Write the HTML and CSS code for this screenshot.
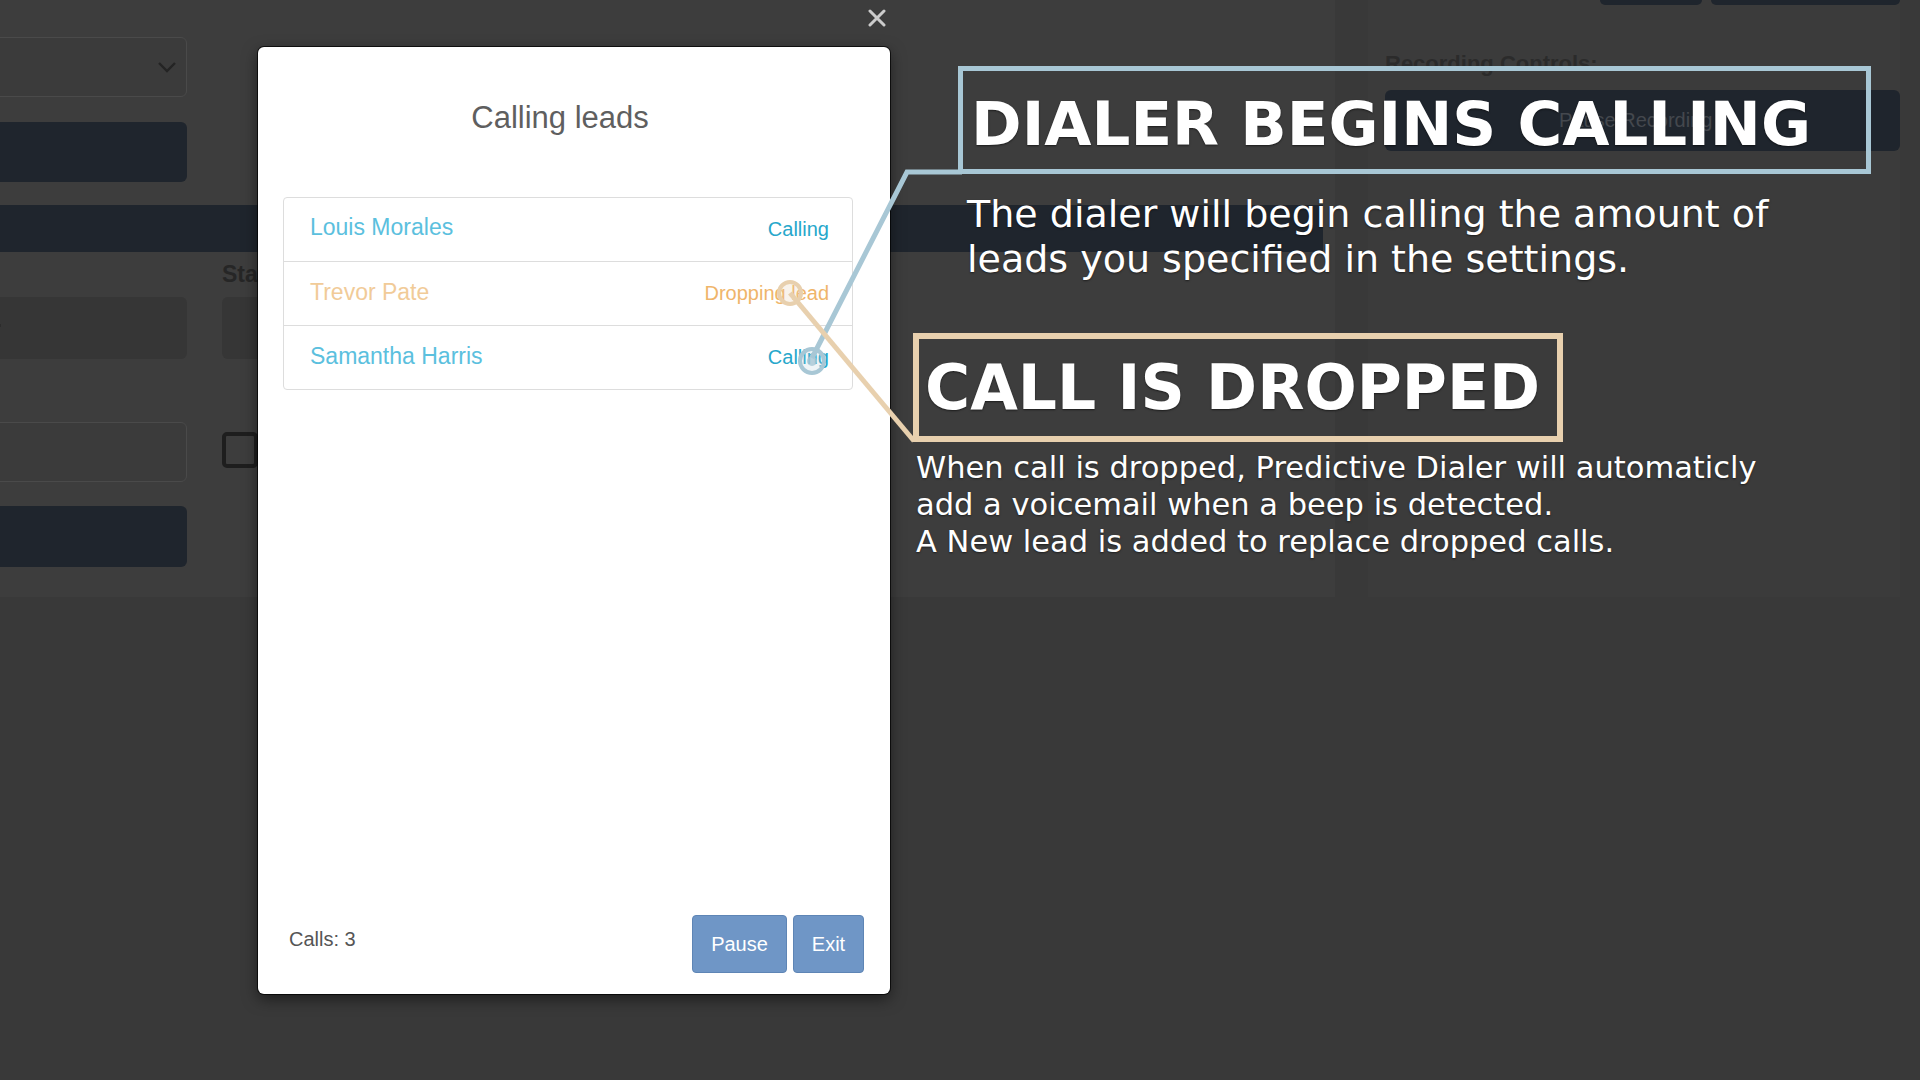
FILE: index.html
```html
<!DOCTYPE html>
<html lang="en">
<head>
<meta charset="utf-8">
<title>Calling leads</title>
<link rel="stylesheet" href="styles.css">
</head>
<body>
<div class="page">
  <div class="left">
    <div class="select">
      <svg class="chev" width="20" height="12" viewBox="0 0 20 12"><path d="M2 2 L10 10 L18 2" fill="none" stroke="#242424" stroke-width="2.4"/></svg>
    </div>
    <div class="navy-btn"></div>
    <div class="navy-bar"></div>
    <div class="form-grid">
      <div class="col col-a">
        <div class="label"></div>
        <div class="field field-fill"><span class="cut"></span></div>
        <div class="field field-line row2"></div>
        <div class="navy-btn btn-last"></div>
      </div>
      <div class="col col-b">
        <div class="label">Status</div>
        <div class="field field-fill"></div>
        <div class="checkbox"></div>
      </div>
    </div>
  </div>
  <div class="right">
    <div class="top-btns">
      <div class="top-btn w1"></div>
      <div class="top-btn w2"></div>
    </div>
    <div class="rec-label">Recording Controls:</div>
    <div class="rec-btn"><span>Pause Recording</span></div>
  </div>
</div>

<div class="modal">
  <div class="modal-header">Calling leads</div>
  <div class="lead-list">
    <div class="lead"><span class="name info">Louis Morales</span><span class="status info-dark">Calling</span></div>
    <div class="lead"><span class="name warn">Trevor Pate</span><span class="status warn-dark">Dropping lead</span></div>
    <div class="lead"><span class="name info">Samantha Harris</span><span class="status info-dark">Calling</span></div>
  </div>
  <div class="modal-footer">
    <span class="calls">Calls: 3</span>
    <div class="actions">
      <button class="btn btn-pause">Pause</button>
      <button class="btn btn-exit">Exit</button>
    </div>
  </div>
</div>

<div class="close-x">
  <svg width="18" height="18" viewBox="0 0 18 18"><path d="M2 2 L16 16 M16 2 L2 16" stroke="#cccccc" stroke-width="3" stroke-linecap="round"/></svg>
</div>

<svg class="callouts" width="1920" height="1080" viewBox="0 0 1920 1080">
  <polyline points="812,358 907,172 962,172" fill="none" stroke="#a8c7d5" stroke-width="5" stroke-linejoin="miter"/>
  <line x1="790" y1="293" x2="914" y2="441" stroke="#e8d0ae" stroke-width="5"/>
  <circle cx="790" cy="293" r="11" fill="rgba(232,208,174,0.25)" stroke="#e8d0ae" stroke-width="4"/>
  <circle cx="812" cy="361" r="12" fill="rgba(168,199,213,0.2)" stroke="#a8c7d5" stroke-width="4"/>
  <circle cx="812" cy="361" r="5" fill="#a8c7d5" opacity="0.8"/>
</svg>

<div class="note-box note-box-1"><span class="note-title">DIALER BEGINS CALLING</span></div>
<div class="note-text note-text-1">The dialer will begin calling the amount of<br>leads you specified in the settings.</div>
<div class="note-box note-box-2"><span class="note-title">CALL IS DROPPED</span></div>
<div class="note-text note-text-2">When call is dropped, Predictive Dialer will automaticly<br>add a voicemail when a beep is detected.<br>A New lead is added to replace dropped calls.</div>
</body>
</html>
```

FILE: styles.css
```css
html, body {
  margin: 0;
  padding: 0;
}
body {
  width: 1920px;
  height: 1080px;
  overflow: hidden;
  background: #393939;
  font-family: "Liberation Sans", Arial, sans-serif;
  position: relative;
}

/* background page (dimmed) */
.page {
  display: grid;
  grid-template-columns: 1335px 532px;
  column-gap: 33px;
  height: 597px;
}
.left {
  background: #3d3d3d;
  padding-top: 37px;
  box-sizing: border-box;
  height: 597px;
  overflow: hidden;
}
.select {
  margin-left: -20px;
  width: 207px;
  height: 60px;
  box-sizing: border-box;
  border: 1px solid #4a4a4a;
  border-radius: 6px;
  background: #3b3b3b;
  display: flex;
  align-items: center;
  justify-content: flex-end;
  padding-right: 9px;
}
.navy-btn {
  margin-top: 25px;
  margin-left: -20px;
  width: 207px;
  height: 60px;
  background: #1f252d;
  border-radius: 6px;
}
.navy-bar {
  margin-top: 23px;
  margin-left: -20px;
  width: 1343px;
  height: 47px;
  background: #1f252d;
}
.form-grid {
  display: grid;
  grid-template-columns: 207px 420px;
  column-gap: 35px;
  margin-left: -20px;
}
.col {
  display: flow-root;
}
.label {
  margin-top: 9px;
  height: 26px;
  line-height: 26px;
  font-size: 23px;
  font-weight: bold;
  color: #262626;
}
.field {
  margin-top: 10px;
  height: 62px;
  box-sizing: border-box;
  border-radius: 6px;
  display: flow-root;
}
.field-fill {
  background: #363636;
}
.field-line {
  background: #3b3b3b;
  border: 1px solid #4a4a4a;
}
.row2 {
  margin-top: 63px;
  height: 60px;
}
.cut {
  display: block;
  margin: 27px 0 0 18px;
  width: 3px;
  height: 3px;
  background: #2c2c2c;
}
.btn-last {
  margin-left: 0;
  margin-top: 24px;
  height: 61px;
}
.checkbox {
  margin-top: 73px;
  width: 36px;
  height: 36px;
  box-sizing: border-box;
  border: 4px solid #1e1e1e;
  border-radius: 5px;
}

.right {
  background: #3b3b3b;
  padding-left: 17px;
  height: 597px;
  box-sizing: border-box;
}
.top-btns {
  display: flex;
  justify-content: flex-end;
  gap: 9px;
  margin-top: -35px;
}
.top-btn {
  height: 40px;
  background: #1f252d;
  border-radius: 5px;
}
.w1 { width: 102px; }
.w2 { width: 189px; }
.rec-label {
  margin-top: 46px;
  font-size: 22px;
  font-weight: bold;
  color: #2b2b2b;
  line-height: 26px;
  height: 26px;
}
.rec-btn {
  margin-top: 13px;
  height: 61px;
  background: #1f252d;
  border-radius: 6px;
  display: flex;
  align-items: center;
  padding-left: 174px;
  color: #44484e;
  font-size: 20px;
  white-space: nowrap;
  overflow: hidden;
}

/* modal */
.modal {
  position: absolute;
  left: 258px;
  top: 47px;
  width: 632px;
  height: 947px;
  box-sizing: border-box;
  background: #ffffff;
  border-radius: 6px;
  box-shadow: 0 0 0 1px rgba(0,0,0,0.7), 0 5px 15px rgba(0,0,0,0.5);
  display: flex;
  flex-direction: column;
  padding: 0 26px 21px 25px;
}
.modal-header {
  padding-top: 54px;
  padding-right: 27px;
  text-align: center;
  font-size: 31px;
  line-height: 34px;
  color: #5f5f5f;
}
.lead-list {
  margin-top: 62px;
  margin-right: 11px;
}
.lead {
  height: 63px;
  border: 1px solid #dddddd;
  margin-bottom: -1px;
  display: flex;
  align-items: center;
  justify-content: space-between;
  padding: 0 23px 0 26px;
}
.lead:first-child {
  border-radius: 4px 4px 0 0;
}
.lead:last-child {
  border-radius: 0 0 4px 4px;
}
.name {
  font-size: 23px;
  margin-top: -2px;
}
.lead:first-child .name {
  margin-top: -4px;
}
.status {
  font-size: 20px;
}
.info { color: #5bc0de; }
.info-dark { color: #27a7cb; }
.warn { color: #f1cb98; }
.warn-dark { color: #efb56a; }

.modal-footer {
  margin-top: auto;
  display: flex;
  align-items: center;
}
.calls {
  padding-left: 6px;
  font-size: 20px;
  color: #555555;
  margin-bottom: 10px;
}
.actions {
  margin-left: auto;
  display: flex;
  gap: 6px;
}
.btn {
  height: 58px;
  border: 1px solid #5e85b5;
  border-radius: 4px;
  background: #6f96c6;
  color: #ffffff;
  font-family: "Liberation Sans", Arial, sans-serif;
  font-size: 20px;
  padding: 0;
}
.btn-pause { width: 95px; }
.btn-exit { width: 71px; }

.close-x {
  position: absolute;
  left: 868px;
  top: 9px;
  width: 18px;
  height: 18px;
}
.close-x svg { display: block; }

/* annotations */
.callouts {
  position: absolute;
  left: 0;
  top: 0;
  pointer-events: none;
}
.note-box {
  position: absolute;
  box-sizing: border-box;
}
.note-title {
  display: block;
  font-family: "DejaVu Sans", sans-serif;
  font-weight: bold;
  font-size: 61px;
  line-height: 61px;
  color: #ffffff;
  white-space: nowrap;
  text-shadow: 0 1px 2px rgba(0,0,0,0.55);
}
.note-box-1 {
  left: 958px;
  top: 66px;
  width: 913px;
  border: 5px solid #a8c7d5;
  padding: 22px 0 15px 8px;
}
.note-box-2 {
  left: 913px;
  top: 333px;
  width: 650px;
  border: 6px solid #e8d0ae;
  padding: 19px 0 17px 6px;
}
.note-box-2 .note-title {
  font-size: 61.5px;
}
.note-text {
  position: absolute;
  font-family: "DejaVu Sans", sans-serif;
  color: #ffffff;
  white-space: nowrap;
  text-shadow: 0 1px 2px rgba(0,0,0,0.5);
}
.note-text-1 {
  left: 967px;
  top: 192px;
  font-size: 38px;
  line-height: 45px;
}
.note-text-2 {
  left: 916px;
  top: 449px;
  font-size: 30.5px;
  line-height: 37px;
}
```
